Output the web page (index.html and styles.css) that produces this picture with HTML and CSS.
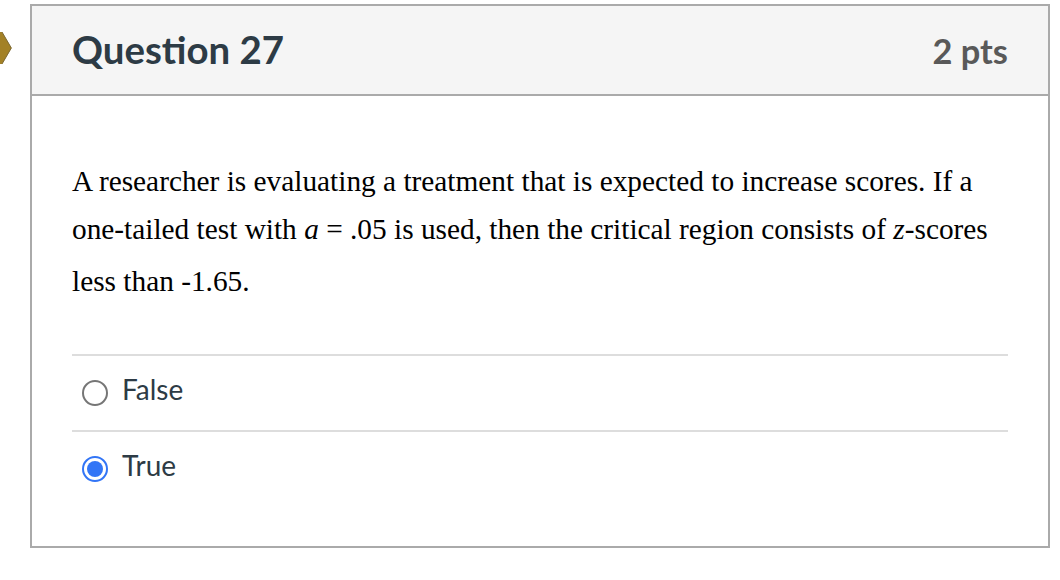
FILE: index.html
```html
<!DOCTYPE html>
<html lang="en">
<head>
<meta charset="utf-8">
<title>Question 27</title>
<link rel="stylesheet" href="styles.css">
</head>
<body>
<div class="page">
  <svg class="flag" width="12" height="32" viewBox="0 0 12 32"><path d="M-2 0H2L11.5 16L2 32H-2Z" fill="#a38126"/><path d="M2 0L11.3 16L2 32" fill="none" stroke="#7d6a35" stroke-width="1"/></svg>
  <main class="question">
    <header class="header">
      <h1 class="title">Question 27</h1>
      <span class="points">2 pts</span>
    </header>
    <div class="prompt">
      <div class="line line-first">A researcher is evaluating a treatment that is expected to increase scores. If a</div>
      <div class="line line-second">one-tailed test with <i>a</i> = .05 is used, then the critical region consists of <i>z</i>-scores</div>
      <div class="line line-third">less than -1.65.</div>
    </div>
    <div class="answers">
      <label class="answer"><span class="radio"></span><span class="label">False</span></label>
      <label class="answer"><span class="radio checked"></span><span class="label">True</span></label>
    </div>
  </main>
</div>
</body>
</html>
```

FILE: styles.css
```css
* { box-sizing: border-box; }
body { margin: 0; background: #fff; color: #2d3b45; font-family: Lato, sans-serif; }
.page { display: flex; align-items: flex-start; height: 580px; padding-top: 4px; overflow: hidden; }
.flag { flex: none; margin: 28px 18px 0 0; }
.question { width: 1020px; height: 544px; border: 2px solid #aaa; }
.header { display: flex; justify-content: space-between; align-items: center; height: 90px; padding: 0 40px; background: #f5f5f5; border-bottom: 2px solid #aaa; }
.title { margin: 0; padding-bottom: 2px; font-size: 38.4px; font-weight: 700; line-height: 48px; }
.points { color: #595959; font-size: 34.4px; font-weight: 700; line-height: 42px; padding-top: 1px; }
.prompt { padding: 61px 40px 0; height: 258px; color: #000; font-family: "Liberation Serif", serif; font-size: 29.333px; }
.line { width: max-content; height: 48px; line-height: 48px; white-space: nowrap; }
.line-second { height: 52px; }
.answers { margin: 0 40px; }
.answer { display: flex; height: 76px; border-top: 2px solid #ddd; padding: 0 10px; }
.radio { display: flex; align-items: center; justify-content: center; width: 26px; height: 26px; margin: 24px 14px 0 0; border: 2px solid #767676; border-radius: 50%; }
.checked { border-color: #3275f6; }
.checked::after { content: ""; width: 16px; height: 16px; border-radius: 50%; background: #3275f6; }
.label { font-size: 28px; line-height: 34px; margin-top: 16px; }
```
